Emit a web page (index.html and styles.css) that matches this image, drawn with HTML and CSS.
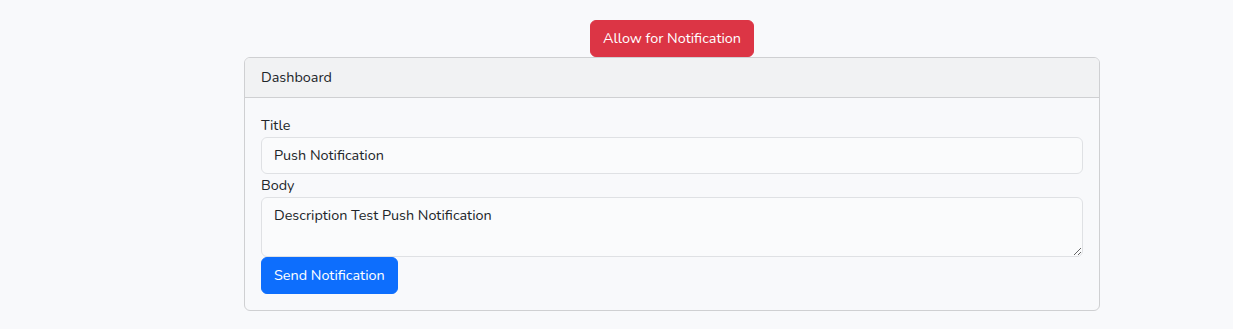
FILE: index.html
```html
<!DOCTYPE html>
<html lang="en">
<head>
<meta charset="utf-8">
<title>Dashboard</title>
<link rel="stylesheet" href="styles.css">
</head>
<body>
<main class="page">
  <div class="top">
    <button class="btn btn-danger" type="button">Allow for Notification</button>
  </div>
  <div class="card">
    <div class="card-header">Dashboard</div>
    <div class="card-body">
      <form class="form">
        <label class="label" for="title">Title</label>
        <input class="control" id="title" type="text" value="Push Notification">
        <label class="label" for="body">Body</label>
        <textarea class="control area" id="body" rows="2">Description Test Push Notification</textarea>
        <div class="actions">
          <button class="btn btn-primary" type="button">Send Notification</button>
        </div>
      </form>
    </div>
  </div>
</main>
</body>
</html>
```
FILE: styles.css
```css
* { box-sizing: border-box; }
html, body { margin: 0; padding: 0; }
body {
  background: #f8f9fb;
  color: #212529;
  font-family: "Nunito", "Lato", "Noto Sans", sans-serif;
  font-size: 14.4px;
  line-height: 1.6;
}
.page {
  width: 856px;
  margin-left: 244px;
  padding-top: 20px;
}
.top {
  display: flex;
  justify-content: center;
}
.btn {
  font-family: inherit;
  font-size: 14.4px;
  line-height: 1.6;
  padding: 6px 12px;
  border: 1px solid transparent;
  border-radius: 6px;
  color: #fff;
  cursor: pointer;
}
.btn-danger { background: #dc3545; border-color: #dc3545; }
.btn-primary { background: #0d6efd; border-color: #0d6efd; }
.card {
  border: 1px solid #cfd0d2;
  border-radius: 6px;
  background: #f8f9fb;
  overflow: hidden;
}
.card-header {
  padding: 8px 16px;
  background: #f1f2f3;
  border-bottom: 1px solid #cfd0d2;
}
.card-body { padding: 16px; }
.form { display: flex; flex-direction: column; }
.label { display: block; }
.control {
  display: block;
  width: 100%;
  font-family: inherit;
  font-size: 14.4px;
  line-height: 1.6;
  color: #212529;
  padding: 6px 12px;
  background: #fafbfc;
  border: 1px solid #dfe1e4;
  border-radius: 6px;
  margin: 0;
}
.area { height: 60px; resize: vertical; }
.actions { display: flex; }
```
